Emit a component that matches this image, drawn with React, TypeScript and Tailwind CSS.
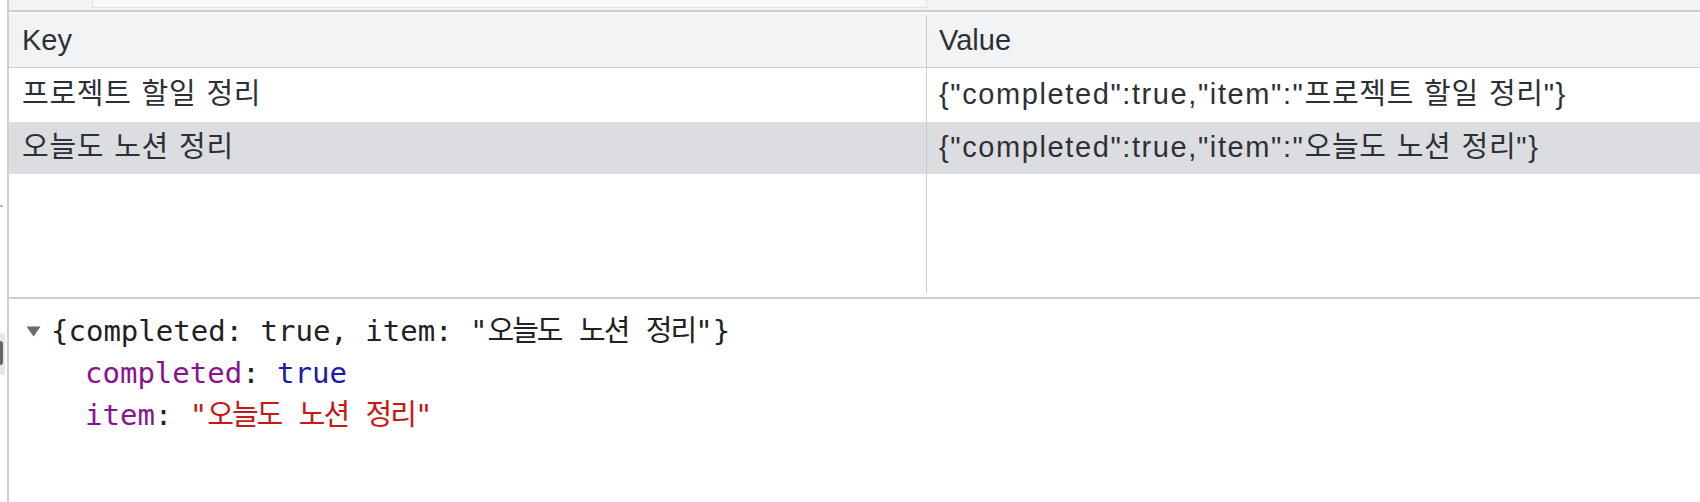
import React from 'react';

const SANS = "font-['Liberation_Sans','Noto_Sans_CJK_KR',sans-serif]";
const MONO = "font-['DejaVu_Sans_Mono','Noto_Sans_CJK_KR',monospace]";

type Row = { key: string; value: { completed: boolean; item: string }; selected?: boolean };

const ROWS: Row[] = [
  { key: '프로젝트 할일 정리', value: { completed: true, item: '프로젝트 할일 정리' } },
  { key: '오늘도 노션 정리', value: { completed: true, item: '오늘도 노션 정리' }, selected: true },
];

// Hangul widths differ a little from the reference font: nudge each word,
// keep the spaces as they are
const Ko: React.FC<{ text: string; mono?: boolean }> = ({ text, mono }) => {
  const words = text.split(' ');
  return (
    <>
      {words.map((w, i) => (
        <React.Fragment key={i}>
          <span className={mono ? 'tracking-[-2px]' : 'tracking-[0.7px]'}>{w}</span>
          {i < words.length - 1 ? <span className={mono ? '' : 'tracking-[2px]'}> </span> : null}
        </React.Fragment>
      ))}
    </>
  );
};

const App: React.FC = () => {
  const selected = ROWS.find(r => r.selected)!;

  return (
    <div className="flex h-[502px] w-[1700px] overflow-hidden bg-white">
      {/* left edge of the neighbouring pane */}
      <div className="flex w-[7px] shrink-0 flex-col bg-white">
        <div className="mt-[205px] h-[2px] w-[3px] bg-[#b9b9b9]" />
        <div className="mt-[126px] h-[42px] w-[5px] rounded-r-[2px] bg-[#e6e6e6]">
          <div className="mt-[8px] h-[24px] w-[3px] rounded-r-[3px] bg-[#666666]" />
        </div>
      </div>

      <div className="flex min-w-0 flex-1 flex-col border-l-2 border-[#cdcfd3]">
        {/* filter toolbar */}
        <div className="flex h-[10px] shrink-0 items-start bg-[#f1f3f4]">
          <div className="ml-[83px] h-[8px] w-[835px] border-x border-b border-[#e0e2e5] bg-[#f8f9fa]" />
        </div>
        <div className="h-[2px] shrink-0 bg-[#cdcfd3]" />
        <div className="h-[3px] shrink-0 bg-[#f6f7f8]" />

        {/* header */}
        <div className={`flex h-[53px] shrink-0 border-b border-[#cacdd1] bg-[#f1f3f4] text-[29px] text-[#2d3136] ${SANS}`}>
          <div className="flex w-[917px] shrink-0 items-center pl-[13px]">Key</div>
          <div className="flex flex-1 items-center border-l border-[#cacdd1] pl-[12px]">Value</div>
        </div>

        {/* rows */}
        {ROWS.map((r, i) => (
          <div
            key={r.key}
            className={`flex shrink-0 text-[29px] text-[#2d3136] ${SANS} ${i === 0 ? 'h-[54px]' : 'h-[52px]'} ${
              r.selected ? 'bg-[#dcdde0]' : 'bg-white'
            }`}
          >
            <div className="flex w-[917px] shrink-0 items-center whitespace-pre pl-[13px]">
              <span>
                <Ko text={r.key} />
              </span>
            </div>
            <div className="flex flex-1 items-center whitespace-pre border-l border-[#cacdd1] pl-[12px]">
              <span>
                <span className="tracking-[1.6px]">
                  {'{"completed":'}
                  {String(r.value.completed)}
                  {',"item":"'}
                </span>
                <Ko text={r.value.item} />
                <span className="tracking-[1.6px]">{'"}'}</span>
              </span>
            </div>
          </div>
        ))}

        {/* empty filler */}
        <div className="flex h-[123px] shrink-0">
          <div className="w-[917px] shrink-0" />
          <div className="mb-[4px] flex-1 border-l border-[#cacdd1]" />
        </div>
        <div className="h-[2px] shrink-0 bg-[#cdcfd3]" />

        {/* preview of the selected value */}
        <div className={`flex flex-1 flex-col pt-[11px] text-[29px] leading-[42px] text-[#222222] ${MONO}`}>
          <div className="flex items-center whitespace-pre">
            <svg className="ml-[17px] mr-[10px] shrink-0" width="15" height="11" viewBox="0 0 15 11">
              <path d="M0.5 0.5 H14.5 L7.5 10.5 Z" fill="#6b6b6b" />
            </svg>
            <span>
              {'{completed: '}
              {String(selected.value.completed)}
              {', item: "'}
              <Ko text={selected.value.item} mono />
              {'"}'}
            </span>
          </div>
          <div className="whitespace-pre pl-[76px]">
            <span className="text-[#881391]">completed</span>
            <span>: </span>
            <span className="text-[#1a1aa6]">{String(selected.value.completed)}</span>
          </div>
          <div className="whitespace-pre pl-[76px]">
            <span className="text-[#881391]">item</span>
            <span>: </span>
            <span className="text-[#c41a16]">
              "<Ko text={selected.value.item} mono />"
            </span>
          </div>
        </div>
      </div>
    </div>
  );
};

export default App;
